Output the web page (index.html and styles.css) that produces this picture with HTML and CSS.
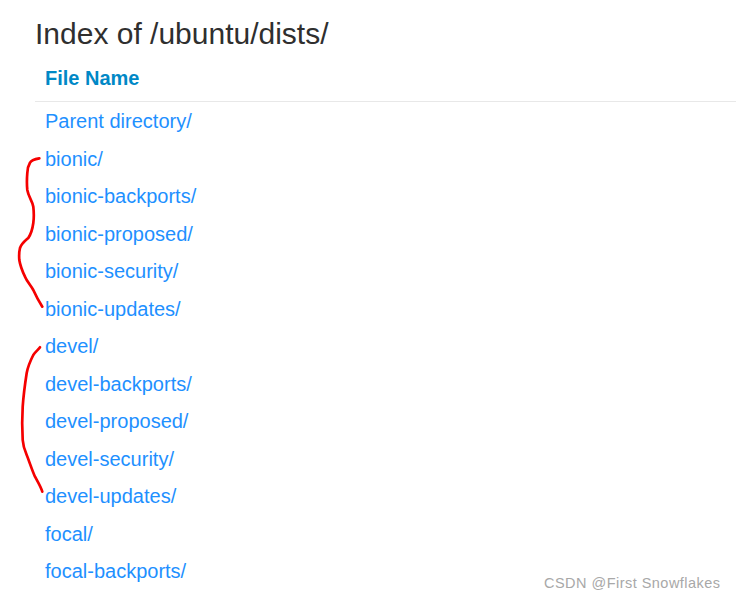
FILE: index.html
```html
<!DOCTYPE html>
<html lang="en">
<head>
    <meta charset="UTF-8">
    <meta name="viewport" content="width=device-width, initial-scale=1.0">
    <title>Index of /ubuntu/dists/</title>
    <link rel="stylesheet" href="styles.css">
</head>
<body>
    <div class="container">
        <h1>Index of /ubuntu/dists/</h1>
        <div class="list-head">File Name</div>
        <ul class="file-list">
            <li><a href="#">Parent directory/</a></li>
            <li><a href="#">bionic/</a></li>
            <li><a href="#">bionic-backports/</a></li>
            <li><a href="#">bionic-proposed/</a></li>
            <li><a href="#">bionic-security/</a></li>
            <li><a href="#">bionic-updates/</a></li>
            <li><a href="#">devel/</a></li>
            <li><a href="#">devel-backports/</a></li>
            <li><a href="#">devel-proposed/</a></li>
            <li><a href="#">devel-security/</a></li>
            <li><a href="#">devel-updates/</a></li>
            <li><a href="#">focal/</a></li>
            <li><a href="#">focal-backports/</a></li>
        </ul>
    </div>

    <!-- Red hand-drawn brackets -->
    <svg class="marks" width="736" height="598" viewBox="0 0 736 598">
        <path d="M39.3 158.3 C35 159 31 160.5 30 162.7 C28 166 27.3 169 27.3 173 C26.8 179 26.8 185 27.3 190 C28.5 197 32.5 201 33.3 206.7 C34 213 34 218 33.3 223 C32.5 229 31 234 28.3 238 C25 241 21.5 243.5 20 248 C19 252 19 256 19.3 260 C20.3 266 22.5 271.5 25 276.7 C27 281.5 30.5 285 33.3 290 C36 296 39 301.5 42.3 306.7"/>
        <path d="M40 347.3 C38 350 35.5 351.5 33.3 355 C30.5 360.5 28 366 26.7 373 C25 384 23.5 395 22.7 406.7 C22 418 22 429 22.7 440 C23.2 447 25 451 26.7 455 C29.5 462 32 470 35 476.7 C37.5 481.5 40.5 486 42.3 491.7"/>
    </svg>

    <div class="watermark">CSDN @First Snowflakes</div>
</body>
</html>
```

FILE: styles.css
```css
html, body {
    height: 100%;
}
body {
    font-family: "Liberation Sans", Arial, sans-serif;
    margin: 0;
    background-color: #fff;
    overflow: hidden;
}
.container {
    padding: 16px 0 0 35px;
}
h1 {
    margin: 0;
    font-size: 30px;
    font-weight: 400;
    line-height: 36px;
    color: #2f2f2f;
}
.list-head {
    padding: 14px 10px 11px;
    font-size: 20px;
    font-weight: 700;
    line-height: 24px;
    color: #0088c6;
    border-bottom: 1px solid #e8e8e8;
}
.file-list {
    list-style: none;
    margin: 0;
    padding: 1px 0 0 10px;
}
.file-list li {
    height: 37.5px;
    line-height: 37.5px;
    font-size: 20px;
}
.file-list a {
    color: #1e90ff;
    text-decoration: none;
}
.marks {
    position: absolute;
    left: 0;
    top: 0;
    fill: none;
    stroke: #f50000;
    stroke-width: 2.7;
    stroke-linecap: round;
}
.watermark {
    position: absolute;
    left: 544px;
    top: 574px;
    font-size: 14.5px;
    line-height: 18px;
    letter-spacing: 0.47px;
    color: #a8a8a8;
}
```
